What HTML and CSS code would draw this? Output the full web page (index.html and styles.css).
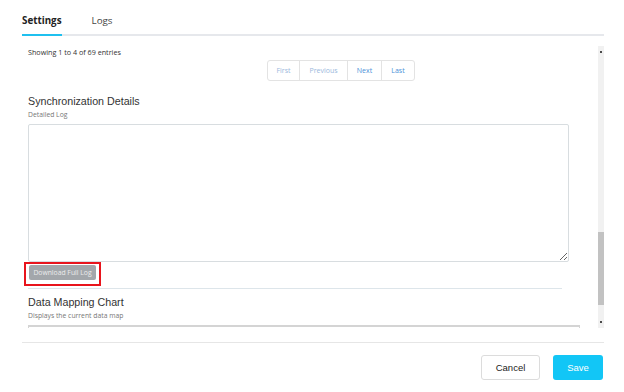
FILE: index.html
```html
<!DOCTYPE html>
<html>
<head>
	<meta charset="utf-8">
	<title>Connector Settings</title>
	<link rel="stylesheet" href="styles.css">
</head>
<body>
	<div class="dialog">
		<div class="tabs">
			<div class="tab active">Settings</div>
			<div class="tab">Logs</div>
		</div>

		<div class="scroller">
			<div class="content">
				<div class="entries">Showing 1 to 4 of 69 entries</div>
				<div class="pager">
					<span class="page disabled first">First</span>
					<span class="page disabled prev">Previous</span>
					<span class="page next">Next</span>
					<span class="page last">Last</span>
				</div>

				<h2 class="section-title">Synchronization Details</h2>
				<div class="hint">Detailed Log</div>
				<textarea class="log" spellcheck="false"></textarea>

				<div class="highlight">
					<button class="download">Download Full Log</button>
				</div>
				<div class="divider"></div>

				<h2 class="section-title chart-title">Data Mapping Chart</h2>
				<div class="hint">Displays the current data map</div>
				<div class="chart"></div>
			</div>

			<div class="scrollbar">
				<div class="arrow"></div>
				<div class="track">
					<div class="thumb"></div>
				</div>
				<div class="arrow"></div>
			</div>
		</div>

		<div class="footer">
			<button class="btn cancel">Cancel</button>
			<button class="btn save">Save</button>
		</div>
	</div>
</body>
</html>
```

FILE: styles.css
```css
body {
	margin: 0;
	background-color: #fff;
	font-family: 'Liberation Sans', Arial, sans-serif;
	color: #333;
}

.dialog {
	width: 582px;
	margin-left: 22px;
}

.tabs {
	display: flex;
	gap: 30px;
	border-bottom: 2px solid #e6e8ec;
}

.tab {
	padding: 14px 0 7px;
	font-family: 'Open Sans', sans-serif;
	font-size: 9.8px;
	line-height: 13px;
	color: #444;
	border-bottom: 2px solid transparent;
	margin-bottom: -2px;
}

.tab.active {
	font-weight: 700;
	color: #222;
	border-bottom-color: #1fc0ef;
}

/* scrolled panel: content + drawn scrollbar */
.scroller {
	display: flex;
	margin-top: 10px;
	height: 282px;
}

.content {
	flex: 1;
	overflow: hidden;
	padding-left: 6px;
}

.scrollbar {
	display: flex;
	flex-direction: column;
	width: 6px;
	background-color: #f1f1f1;
}

.arrow {
	height: 12px;
	background: linear-gradient(#4a4a4a, #4a4a4a) center / 2px 2px no-repeat;
}

.track {
	flex: 1;
	padding-top: 174px;
}

.thumb {
	height: 73px;
	background-color: #c2c2c2;
}

.entries {
	font-family: 'Open Sans', sans-serif;
	font-size: 7.2px;
	line-height: 12px;
	color: #333;
}

.pager {
	display: inline-flex;
	margin: 2px 0 0 239px;
	height: 21px;
	border: 1px solid #e3e3e3;
	border-radius: 3px;
	box-sizing: border-box;
}

.page {
	display: flex;
	align-items: center;
	justify-content: center;
	font-family: 'Open Sans', sans-serif;
	font-size: 7px;
	color: #4a8fd8;
	border-left: 1px solid #e3e3e3;
}

.page.first {
	width: 31px;
	border-left: none;
}

.page.prev {
	width: 47px;
}

.page.next {
	width: 33px;
}

.page.last {
	width: 32px;
}

.page.disabled {
	color: #9ab8dc;
}

.section-title {
	margin: 13px 0 0;
	font-size: 10.7px;
	line-height: 14px;
	font-weight: 400;
	color: #333;
}

.hint {
	font-family: 'Open Sans', sans-serif;
	font-size: 6.8px;
	line-height: 14px;
	color: #777;
}

.log {
	display: block;
	margin-top: 2px;
	width: 541px;
	height: 138px;
	box-sizing: border-box;
	border: 1px solid #d8dde0;
	border-radius: 2px;
	padding: 4px;
}

.highlight {
	width: 77px;
	height: 24px;
	box-sizing: border-box;
	margin-left: -4px;
	padding: 1px 0 0 3px;
	border: 2px solid #e8141c;
}

.download {
	display: block;
	width: 67px;
	height: 15px;
	padding: 0;
	border: none;
	border-radius: 2px;
	background-color: #a3a7ab;
	color: #ececec;
	font-family: 'Open Sans', sans-serif;
	font-size: 6.8px;
}

.divider {
	margin-top: 2px;
	width: 534px;
	border-top: 1px solid #dde5ea;
}

.chart-title {
	margin-top: 6px;
}

.chart {
	margin-top: 2px;
	width: 552px;
	height: 50px;
	box-sizing: border-box;
	border: 1px solid #d4d4d4;
	border-top-width: 2px;
}

.footer {
	display: flex;
	justify-content: flex-end;
	align-items: center;
	gap: 13px;
	margin-top: 14px;
	border-top: 1px solid #e6e6e6;
	padding-top: 12px;
}

.btn {
	height: 25px;
	border-radius: 3px;
	font-family: 'Liberation Sans', Arial, sans-serif;
	font-size: 9.5px;
	padding: 0;
}

.cancel {
	width: 59px;
	background-color: #fff;
	border: 1px solid #dcdcdc;
	color: #222;
}

.save {
	width: 50px;
	border: none;
	background-color: #12c6f6;
	color: #fff;
	margin-right: 1px;
}
```
